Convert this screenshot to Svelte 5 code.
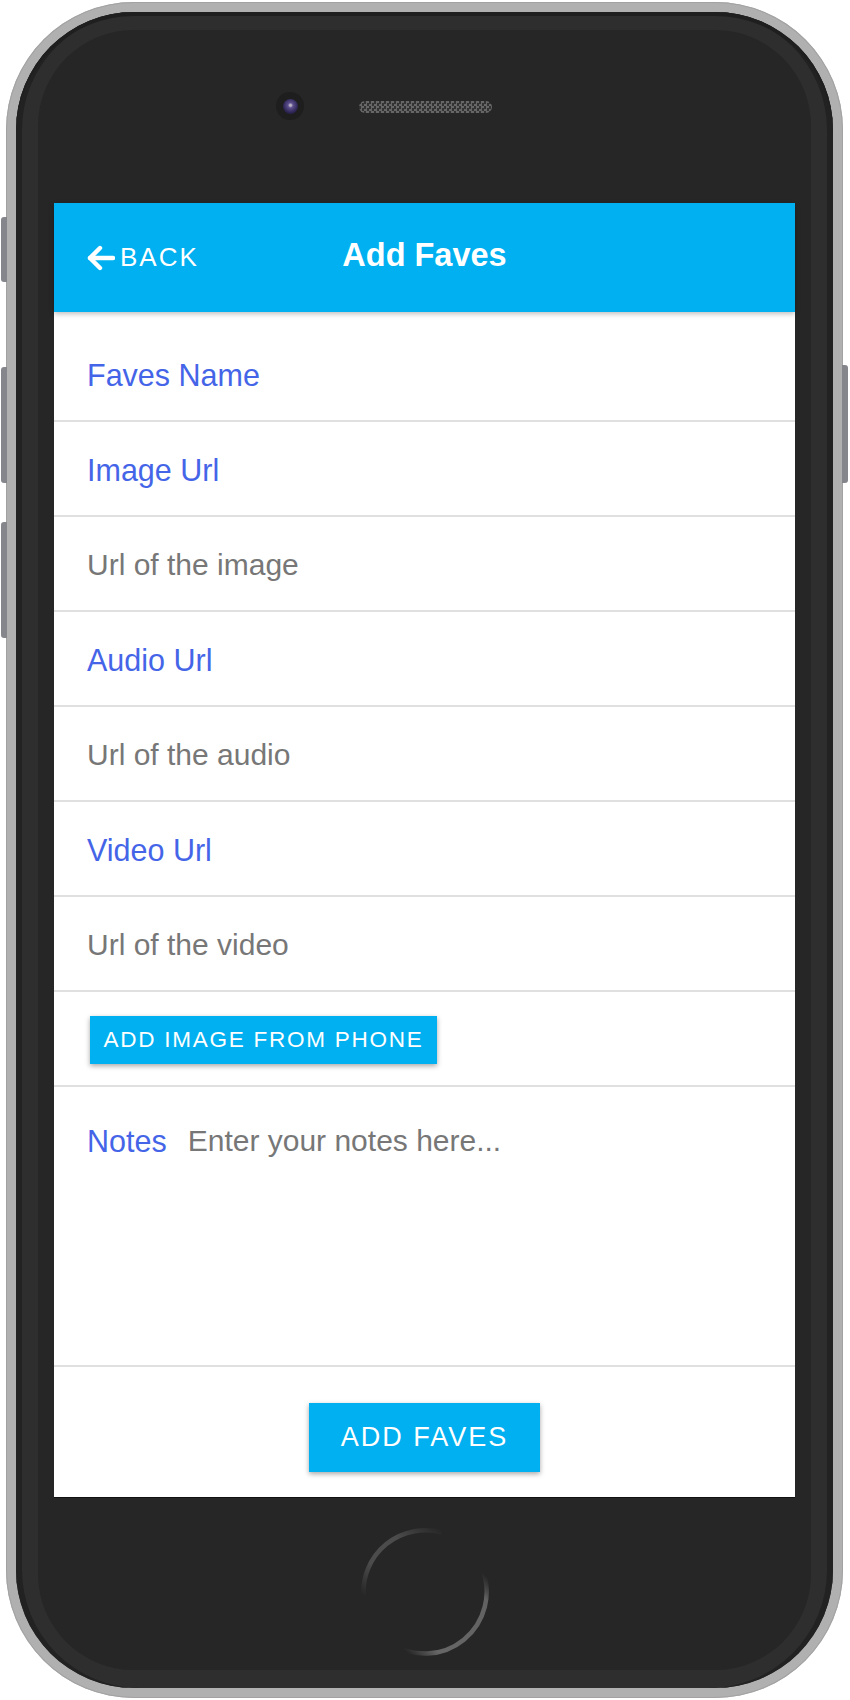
<script>
  const rows = [
    { text: 'Faves Name', kind: 'label' },
    { text: 'Image Url', kind: 'label' },
    { text: 'Url of the image', kind: 'hint' },
    { text: 'Audio Url', kind: 'label' },
    { text: 'Url of the audio', kind: 'hint' },
    { text: 'Video Url', kind: 'label' },
    { text: 'Url of the video', kind: 'hint' }
  ];
</script>

<div class="page">
  <div class="phone">
    <span class="side side-mute"></span>
    <span class="side side-up"></span>
    <span class="side side-down"></span>
    <span class="side side-power"></span>

    <div class="shell">
      <div class="panel">
        <div class="top">
          <span class="camera"><span class="lens"></span></span>
          <span class="speaker"></span>
        </div>

        <main class="screen">
          <header class="bar">
            <button class="back">
              <svg width="28" height="26" viewBox="0 0 28 26" fill="none" stroke="#fff" stroke-width="4.4" stroke-linecap="round" stroke-linejoin="round" aria-hidden="true">
                <path d="M26 13H3"/>
                <path d="M13 3 3 13l10 10"/>
              </svg>
              <span>BACK</span>
            </button>
            <h1>Add Faves</h1>
          </header>

          <div class="form">
            {#each rows as row}
              <div class="row {row.kind}">{row.text}</div>
            {/each}
            <div class="row upload">
              <button class="btn btn-small">ADD IMAGE FROM PHONE</button>
            </div>
            <div class="row notes">
              <span class="label">Notes</span>
              <span class="hint">Enter your notes here...</span>
            </div>
            <div class="actions">
              <button class="btn btn-large">ADD FAVES</button>
            </div>
          </div>
        </main>

        <div class="bottom">
          <svg class="home" width="130" height="130" viewBox="0 0 130 130" fill="none" aria-hidden="true">
            <defs>
              <linearGradient id="ring-a" x1="0" y1="1" x2="1" y2="0">
                <stop offset="0" stop-color="#4c4c4c" stop-opacity="0"/>
                <stop offset="0.3" stop-color="#4c4c4c"/>
                <stop offset="0.65" stop-color="#4c4c4c"/>
                <stop offset="1" stop-color="#4c4c4c" stop-opacity="0"/>
              </linearGradient>
              <linearGradient id="ring-b" x1="0.1" y1="0.9" x2="1" y2="0.1">
                <stop offset="0" stop-color="#666" stop-opacity="0"/>
                <stop offset="0.2" stop-color="#666"/>
                <stop offset="0.85" stop-color="#626262"/>
                <stop offset="1" stop-color="#555" stop-opacity="0"/>
              </linearGradient>
            </defs>
            <path d="M3.500 69A62 62 0 0 1 82 5.500" stroke="url(#ring-a)" stroke-width="4.500"/>
            <path d="M122 41A62 62 0 0 1 30 116" stroke="url(#ring-b)" stroke-width="4.500"/>
          </svg>
        </div>
      </div>
    </div>
  </div>
</div>

<style>
  :global(body) {
    margin: 0;
    background: #fff;
  }

  .page {
    width: 850px;
    height: 1700px;
    padding: 2px 6px;
    box-sizing: border-box;
    font-family: "Liberation Sans", Arial, sans-serif;
  }

  .phone {
    position: relative;
    height: 100%;
    width: 837px;
    box-sizing: border-box;
    padding: 10px;
    border-radius: 128px;
    background: #b0b0b0;
    box-shadow: inset 0 0 0 1px #a2a2a2;
  }

  .side {
    position: absolute;
    width: 6px;
    background: #85858c;
  }

  .side-mute { left: -5px; top: 215px; height: 65px; border-radius: 3px 0 0 3px; }
  .side-up { left: -5px; top: 365px; height: 116px; border-radius: 3px 0 0 3px; }
  .side-down { left: -5px; top: 520px; height: 116px; border-radius: 3px 0 0 3px; }
  .side-power { right: -5px; top: 363px; height: 118px; border-radius: 0 3px 3px 0; }

  .shell {
    height: 100%;
    box-sizing: border-box;
    padding: 18px 22px;
    border-radius: 118px;
    background: #2e2e2e;
    box-shadow: inset 0 4px 0 #1f1f1f, inset 6px 0 0 #222, inset -6px 0 0 #222;
  }

  .panel {
    height: 100%;
    display: flex;
    flex-direction: column;
    border-radius: 96px;
    background: #262626;
  }

  .top {
    height: 173px;
    flex: none;
    display: flex;
    align-items: center;
    box-sizing: border-box;
    padding-left: 238px;
  }

  .camera {
    width: 28px;
    height: 28px;
    margin-top: -21px;
    border-radius: 50%;
    background: #1e1e1e;
    display: flex;
    align-items: center;
    justify-content: center;
  }

  .lens {
    width: 15px;
    height: 15px;
    border-radius: 50%;
    background: radial-gradient(circle at 50% 42%, #b9b2c4 0 8%, #5d4f8e 22%, #2f2656 62%, #14112a 100%);
  }

  .speaker {
    width: 133px;
    height: 12px;
    margin: -20px 0 0 55px;
    border-radius: 6px;
    background: conic-gradient(#666 25%, #333 0 50%, #666 0 75%, #333 0) 0 0 / 5px 5px;
    filter: blur(0.5px);
  }

  .screen {
    flex: none;
    height: 1294px;
    margin: 0 16px;
    display: flex;
    flex-direction: column;
    background: #fff;
    box-shadow: 0 1px 0 #111;
  }

  .bar {
    flex: none;
    height: 109px;
    display: flex;
    align-items: center;
    position: relative;
    background: #00b0f0;
    box-shadow: 0 2px 5px rgba(0, 0, 0, 0.25);
    color: #fff;
  }

  .back {
    display: flex;
    align-items: center;
    gap: 5px;
    margin-left: 33px;
    padding: 0;
    border: 0;
    background: none;
    color: #fff;
    font: 26px "Liberation Sans", Arial, sans-serif;
    letter-spacing: 2px;
  }

  h1 {
    position: absolute;
    left: 0;
    right: 0;
    margin: -4px 0 0;
    text-align: center;
    font-size: 32.500px;
    font-weight: 700;
  }

  .form {
    flex: 1;
    display: flex;
    flex-direction: column;
    padding-top: 15px;
  }

  .row {
    flex: none;
    height: 95px;
    box-sizing: border-box;
    display: flex;
    align-items: center;
    padding: 3px 0 0 33px;
    border-bottom: 2px solid #e0e0e0;
    font-size: 30.500px;
  }

  .row.label, .label {
    color: #4565e8;
  }

  .row.hint, .hint {
    color: #777;
    font-size: 30px;
  }

  .upload {
    padding-left: 36px;
  }

  .notes {
    height: 280px;
    align-items: flex-start;
    gap: 21px;
    padding-top: 37px;
  }

  .actions {
    flex: 1;
    display: flex;
    justify-content: center;
    padding-top: 36px;
    align-items: flex-start;
  }

  .btn {
    border: 0;
    padding: 0;
    background: #00b0f0;
    color: #fff;
    font-family: "Liberation Sans", Arial, sans-serif;
    box-shadow: 0 2px 5px rgba(0, 0, 0, 0.35);
  }

  .btn-small {
    width: 347px;
    height: 48px;
    font-size: 22.500px;
    letter-spacing: 1.750px;
  }

  .btn-large {
    width: 231px;
    height: 69px;
    font-size: 27px;
    letter-spacing: 2px;
  }

  .bottom {
    flex: 1;
    display: flex;
    justify-content: center;
    padding-top: 30px;
  }
</style>
